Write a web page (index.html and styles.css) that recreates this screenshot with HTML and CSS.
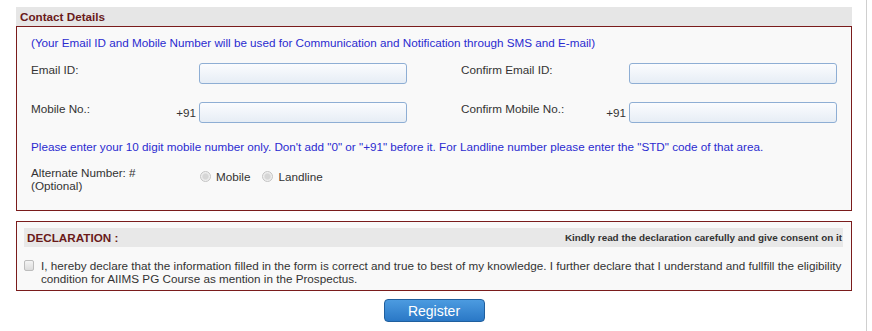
FILE: index.html
```html
<!DOCTYPE html>
<html>
<head>
<meta charset="utf-8">
<link rel="stylesheet" href="styles.css">
</head>
<body>
<div class="page">
  <div class="content">
    <div class="section-title">Contact Details</div>
    <div class="box contact">
      <p class="info">(Your Email ID and Mobile Number will be used for Communication and Notification through SMS and E-mail)</p>
      <div class="grid">
        <div class="lbl">Email ID:</div>
        <div class="field"></div>
        <div></div>
        <div class="lbl">Confirm Email ID:</div>
        <div class="field"></div>

        <div class="lbl"><span>Mobile No.:</span><span class="prefix">+91</span></div>
        <div class="field"></div>
        <div></div>
        <div class="lbl"><span>Confirm Mobile No.:</span><span class="prefix">+91</span></div>
        <div class="field"></div>
      </div>
      <p class="info note">Please enter your 10 digit mobile number only. Don't add "0" or "+91" before it. For Landline number please enter the "STD" code of that area.</p>
      <div class="alt">
        <div class="alt-label">Alternate Number: #<br>(Optional)</div>
        <div class="radios">
          <span class="radio"></span><span class="rtext">Mobile</span>
          <span class="radio"></span><span class="rtext">Landline</span>
        </div>
      </div>
    </div>

    <div class="box decl">
      <div class="decl-head">
        <span class="decl-title">DECLARATION :</span>
        <span class="decl-hint">Kindly read the declaration carefully and give consent on it</span>
      </div>
      <div class="decl-body">
        <span class="check"></span>
        <p class="decl-text">I, hereby declare that the information filled in the form is correct and true to best of my knowledge. I further declare that I understand and fullfill the eligibility condition for AIIMS PG Course as mention in the Prospectus.</p>
      </div>
    </div>

    <div class="actions">
      <button class="btn">Register</button>
    </div>
  </div>
</div>
</body>
</html>
```
FILE: styles.css
```css
* { box-sizing: border-box; }
html, body { margin: 0; padding: 0; background: #fff; }
body {
  font-family: "Liberation Sans", Arial, sans-serif;
  font-size: 11.7px;
  color: #333;
}
.page {
  width: 867px;
  height: 331px;
  border-right: 1px solid #cfcfcf;
  padding: 7px 0 0 16px;
}
.content { width: 836px; }
.section-title {
  background: #e6e6e6;
  height: 19px;
  line-height: 20px;
  padding-left: 4px;
  font-weight: bold;
  color: #6a1a1a;
  font-size: 11.7px;
}
.box {
  border: 1px solid #7a1c1c;
  background: #f9f9f9;
}
.contact {
  padding: 9px 0 18px 14px;
}
.info {
  margin: 0;
  line-height: 14px;
  color: #2b2bd0;
}
.grid {
  display: grid;
  grid-template-columns: 168px 208px 54px 168px 208px;
  row-gap: 18px;
  margin-top: 13px;
}
.lbl {
  display: flex;
  justify-content: space-between;
  line-height: 14px;
}
.prefix {
  padding-right: 3px;
  padding-top: 4px;
}
.field {
  height: 21px;
  border: 1px solid #8eaed4;
  border-radius: 3px;
  background: linear-gradient(#fbfcfe, #e6edf5);
}
.note { margin-top: 17px; }
.alt {
  display: flex;
  margin-top: 12px;
  line-height: 13px;
}
.alt-label { width: 169px; }
.radios {
  display: flex;
  align-items: center;
  height: 20px;
}
.radio {
  width: 11px;
  height: 11px;
  border-radius: 50%;
  border: 1px solid #c4c4c4;
  background: radial-gradient(circle, #d6d6d6 0 40%, #efefef 60%);
}
.rtext { margin: 0 12px 0 5px; }
.decl {
  margin-top: 10px;
  padding: 6px 8px 5px 7px;
}
.decl-head {
  display: flex;
  justify-content: space-between;
  align-items: center;
  background: #e8e8e8;
  height: 19px;
  padding: 0 1px 0 3px;
}
.decl-title {
  font-weight: bold;
  color: #6a1a1a;
  font-size: 11.7px;
}
.decl-hint {
  font-weight: bold;
  font-size: 9.9px;
  color: #333;
}
.decl-body {
  display: flex;
  align-items: flex-start;
  margin-top: 12px;
}
.check {
  flex: none;
  width: 10px;
  height: 11px;
  margin-top: 1px;
  border: 1px solid #bdbdbd;
  border-radius: 2px;
  background: linear-gradient(#f4f4f4, #dcdcdc);
}
.decl-text {
  margin: 0 0 0 7px;
  line-height: 13px;
}
.actions {
  display: flex;
  justify-content: center;
  margin-top: 8px;
}
.btn {
  width: 101px;
  height: 23px;
  border: 1px solid #1f5f9e;
  border-radius: 4px;
  background: linear-gradient(#4c9be0, #2a78c6);
  color: #fff;
  font-family: "Liberation Sans", Arial, sans-serif;
  font-size: 14px;
  padding: 0;
}
```
